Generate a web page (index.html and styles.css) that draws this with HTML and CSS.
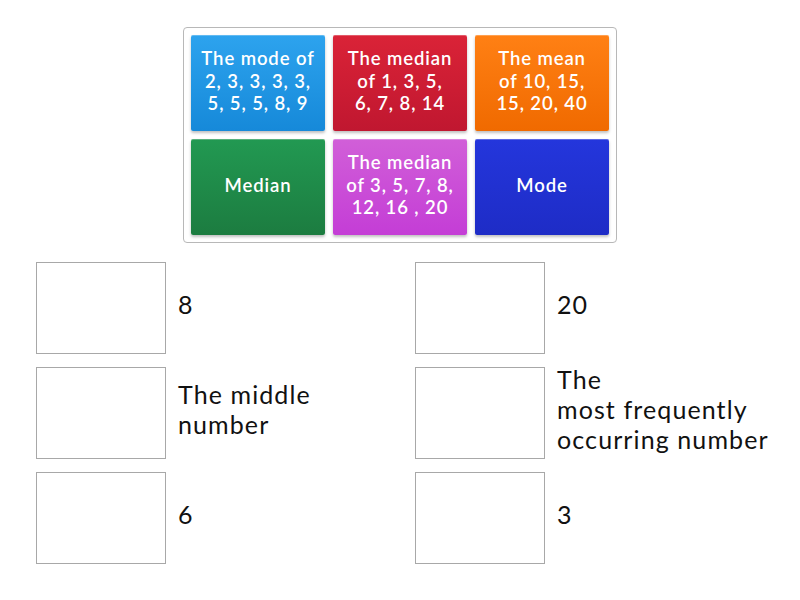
FILE: index.html
```html
<!DOCTYPE html>
<html>
<head>
<meta charset="utf-8">
<link rel="stylesheet" href="styles.css">
</head>
<body>
<div class="page">
  <div class="bank">
    <div class="tile blue">The mode of<br>2, 3, 3, 3, 3,<br>5, 5, 5, 8, 9</div>
    <div class="tile red">The median<br>of 1, 3, 5,<br>6, 7, 8, 14</div>
    <div class="tile orange">The mean<br>of 10, 15,<br>15, 20, 40</div>
    <div class="tile green">Median</div>
    <div class="tile violet">The median<br>of 3, 5, 7, 8,<br>12, 16 , 20</div>
    <div class="tile navy">Mode</div>
  </div>
  <div class="answers">
    <div class="row"><div class="drop"></div><div class="label">8</div></div>
    <div class="row"><div class="drop"></div><div class="label">20</div></div>
    <div class="row"><div class="drop"></div><div class="label">The middle<br>number</div></div>
    <div class="row"><div class="drop"></div><div class="label">The<br>most frequently<br>occurring number</div></div>
    <div class="row"><div class="drop"></div><div class="label">6</div></div>
    <div class="row"><div class="drop"></div><div class="label">3</div></div>
  </div>
</div>
</body>
</html>
```
FILE: styles.css
```css
html, body {
  margin: 0;
  padding: 0;
  background: #fff;
}
body {
  font-family: Lato, "Open Sans", sans-serif;
}
.page {
  display: flex;
  flex-direction: column;
  align-items: center;
  padding-top: 27px;
}
.bank {
  display: grid;
  grid-template-columns: repeat(3, 134px);
  grid-auto-rows: 96px;
  gap: 8px;
  padding: 7px;
  border: 1px solid #b8b8b8;
  border-radius: 4px;
}
.tile {
  display: flex;
  align-items: center;
  justify-content: center;
  text-align: center;
  color: #fff;
  font-size: 18.5px;
  font-weight: 600;
  line-height: 22.5px;
  letter-spacing: 0.9px;
  white-space: nowrap;
  padding: 0 0 4px;
  border-radius: 2px;
  box-shadow: 0 2px 3px rgba(0,0,0,0.25), inset 0 1px 0 rgba(255,255,255,0.25);
}
.blue { background: linear-gradient(#2da3ee, #1689d9); }
.red { background: linear-gradient(#da2337, #c01730); }
.orange { background: linear-gradient(#ff8014, #f06a00); }
.green { background: linear-gradient(#229952, #1c7c40); }
.violet { background: linear-gradient(#d15fd8, #c43dd6); }
.navy { background: linear-gradient(#2436dc, #1e2cc6); }
.answers {
  align-self: stretch;
  display: grid;
  grid-template-columns: 379px 379px;
  grid-auto-rows: 92px;
  row-gap: 13px;
  padding-left: 36px;
  margin-top: 19px;
}
.row {
  display: flex;
  align-items: center;
}
.drop {
  width: 128px;
  height: 90px;
  border: 1px solid #a8a8a8;
  flex: none;
}
.label {
  margin-left: 12px;
  font-size: 25px;
  line-height: 30px;
  letter-spacing: 1.1px;
  color: #111;
  padding-bottom: 8px;
  white-space: nowrap;
}
```
